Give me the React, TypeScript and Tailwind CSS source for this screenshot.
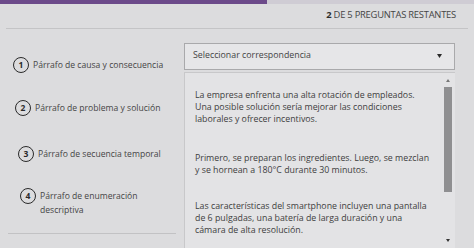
import React from 'react';

const labels = [
  { n: '1', text: ['Párrafo de causa y consecuencia'], mt: 'mt-[28px]', pl: 'pl-[13px]' },
  { n: '2', text: ['Párrafo de problema y solución'], mt: 'mt-[27px]', pl: 'pl-[15px]' },
  { n: '3', text: ['Párrafo de secuencia temporal'], mt: 'mt-[30px]', pl: 'pl-[18px]' },
  { n: '4', text: ['Párrafo de enumeración', 'descriptiva'], mt: 'mt-[26px]', pl: 'pl-[20px]' },
];

const options = [
  {
    mt: 'mt-[17px]',
    lines: [
      'La empresa enfrenta una alta rotación de empleados.',
      'Una posible solución sería mejorar las condiciones',
      'laborales y ofrecer incentivos.',
    ],
  },
  {
    mt: 'mt-[28px]',
    lines: [
      'Primero, se preparan los ingredientes. Luego, se mezclan',
      'y se hornean a 180°C durante 30 minutos.',
    ],
  },
  {
    mt: 'mt-[24px]',
    lines: [
      'Las características del smartphone incluyen una pantalla',
      'de 6 pulgadas, una batería de larga duración y una',
      'cámara de alta resolución.',
    ],
  },
];

function Circle({ n }: { n: string }) {
  return (
    <div className="w-[16px] h-[16px] shrink-0 rounded-full border-[1.6px] border-[#2a2a2a] flex items-center justify-center text-[8.5px] font-bold text-[#2a2a2a] leading-none">
      {n}
    </div>
  );
}

export default function App() {
  return (
    <div
      className="w-[474px] h-[248px] overflow-hidden bg-[#dcdcde] text-[#3d3d3d]"
      style={{ fontFamily: '"Open Sans", "Noto Sans", sans-serif' }}
    >
      {/* progress */}
      <div className="h-[4px] w-full bg-[#cfccd4]">
        <div className="h-full w-[267px] bg-[#6c4a8a]" />
      </div>

      <div className="flex justify-end pr-[18px] pt-[4px] h-[24px] text-[9.4px] text-[#444] tracking-tight">
        <span>
          <b className="font-bold text-[#2d2d2d]">2</b> DE 5 PREGUNTAS RESTANTES
        </span>
      </div>
      <div className="h-px bg-[#c4c4c6] mx-[6px]" />

      <div className="flex">
        {/* left labels */}
        <div className="w-[184px] shrink-0 flex flex-col">
          {labels.map((l) => (
            <div key={l.n} className={`flex items-start gap-[4px] ${l.mt} ${l.pl}`}>
              <Circle n={l.n} />
              <div className="text-[8.6px] leading-[14px] mt-[1px] text-[#454545]">
                {l.text.map((t) => (
                  <div key={t} className="whitespace-nowrap">
                    {t}
                  </div>
                ))}
              </div>
            </div>
          ))}
          <div className="h-px bg-[#c2c2c4] mt-[16px] mx-[8px]" />
        </div>

        {/* right column */}
        <div className="w-[271px] shrink-0 flex flex-col">
          <div className="mt-[14px] h-[27px] border border-[#a9a9ab] bg-[#e6e6e8] flex items-center justify-between pl-[8px] pr-[12px]">
            <span className="text-[8.8px] text-[#444] -mt-[2px]">Seleccionar correspondencia</span>
            <svg width="5" height="4" viewBox="0 0 5 4" className="-mt-[2px]">
              <path d="M0 0h5L2.5 4z" fill="#2a2a2a" />
            </svg>
          </div>

          <div className="mt-[2px] h-[180px] border-l border-t border-[#c8c8ca] bg-[#e3e3e5] flex">
            <div className="flex-1 pl-[10px]">
              {options.map((o, i) => (
                <div key={i} className={`${o.mt} text-[8.8px] leading-[11.8px] text-[#3e3e3e]`}>
                  {o.lines.map((ln) => (
                    <div key={ln} className="whitespace-nowrap">
                      {ln}
                    </div>
                  ))}
                </div>
              ))}
            </div>
            {/* scrollbar */}
            <div className="w-[10px] mr-[2px] flex flex-col items-center">
              <svg width="4" height="3" viewBox="0 0 4 3" className="mt-[6px]">
                <path d="M0 3h4L2 0z" fill="#777" />
              </svg>
              <div className="mt-[5px] w-[8px] h-[105px] bg-[#8f8f91]" />
              <div className="flex-1" />
              <svg width="4" height="3" viewBox="0 0 4 3" className="mb-[10px]">
                <path d="M0 0h4L2 3z" fill="#333" />
              </svg>
            </div>
          </div>
        </div>
      </div>
    </div>
  );
}
